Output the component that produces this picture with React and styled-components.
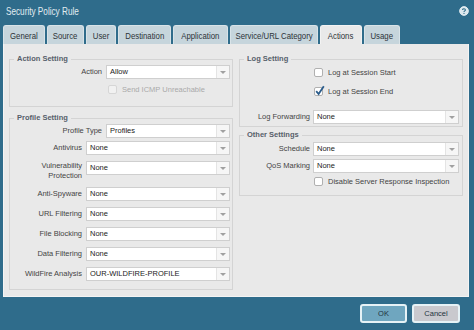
import React from 'react';
import styled, { createGlobalStyle } from 'styled-components';

const GlobalStyle = createGlobalStyle`
  html, body {
    margin: 0;
    padding: 0;
  }
  body {
    width: 474px;
    height: 330px;
    overflow: hidden;
    background: #2f6c8b;
  }
`;

const Dialog = styled.div`
  width: 474px;
  height: 330px;
  background: #2f6c8b;
  display: flex;
  flex-direction: column;
  font-family: 'Liberation Sans', Arial, sans-serif;
`;

// Title bar
const TitleBar = styled.div`
  height: 23px;
  display: flex;
  align-items: center;
  justify-content: space-between;
  padding: 0 5px 2px 6px;
  box-sizing: border-box;
`;

// narrow look of the original UI font
const Narrow = styled.span`
  display: inline-block;
  white-space: nowrap;
  transform: scaleX(${(p) => p.sx || 0.82});
  transform-origin: ${(p) => p.origin || 'center'};
`;

const Title = styled.span`
  font-size: 10.5px;
  color: #e2edf2;
`;

const HelpIcon = () => (
  <svg width="10" height="10" viewBox="0 0 10 10">
    <circle cx="5" cy="5" r="4.4" fill="#dce8ee" stroke="#f4f8fa" strokeWidth="0.8" />
    <path d="M3.6 3.9 C3.6 2.4 6.4 2.4 6.4 3.9 C6.4 4.9 5 4.9 5 6" fill="none" stroke="#2f6c8b" strokeWidth="1.1" />
    <circle cx="5" cy="7.4" r="0.6" fill="#2f6c8b" />
  </svg>
);

// Tabs
const TabStrip = styled.div`
  display: flex;
  gap: 2px;
  height: 19px;
  padding-left: 3px;
  margin-top: 2px;
`;

const Tab = styled.div`
  width: ${(p) => p.w}px;
  height: 19px;
  box-sizing: border-box;
  display: flex;
  align-items: center;
  justify-content: center;
  border-radius: 3px 3px 0 0;
  background: ${(p) => (p.active ? '#e9e9e9' : '#c6d5dc')};
  border: 1px solid ${(p) => (p.active ? '#f3f3f3' : '#d8e3e8')};
  border-bottom: none;
  font-size: 9.5px;
  color: #2c3338;
  overflow: hidden;
`;

// Main panel
const Panel = styled.div`
  margin: 0 5px 0 3px;
  height: 253px;
  box-sizing: border-box;
  background: #e9e9e9;
  border: 1px solid #f4f4f4;
  border-top: none;
  display: grid;
  grid-template-columns: 1fr 1fr;
  column-gap: 6px;
  padding: 10px 5px 0 5px;
  align-items: start;
`;

const Column = styled.div`
  display: flex;
  flex-direction: column;
  gap: ${(p) => p.gap}px;
`;

const Fieldset = styled.fieldset`
  margin: 0;
  min-width: 0;
  border: 1px solid #d4d4d4;
  padding: ${(p) => p.pad || '1px 2px 8px 0'};
  display: flex;
  flex-direction: column;
  gap: ${(p) => p.gap || 6}px;
`;

const Legend = styled.legend`
  margin-left: 4px;
  padding: 0 3px;
  font-size: 7.5px;
  font-weight: bold;
  line-height: 10px;
  color: #56606a;
`;

const Row = styled.div`
  display: flex;
  align-items: ${(p) => (p.top ? 'flex-start' : 'center')};
  min-height: 14px;
  margin-top: ${(p) => p.mt || 0}px;
`;

const Label = styled.div`
  width: ${(p) => p.w}px;
  flex: none;
  padding-right: ${(p) => p.gap || 4}px;
  text-align: right;
  font-size: 7.5px;
  line-height: 10px;
  color: #444;
`;

const SelectBox = styled.div`
  flex: 1;
  height: 14px;
  box-sizing: border-box;
  display: flex;
  background: #fff;
  border: 1px solid #cfcfcf;
`;

const SelectValue = styled.span`
  flex: 1;
  padding-left: 3px;
  font-size: 7.5px;
  line-height: 12px;
  color: #222;
  white-space: nowrap;
`;

const ArrowCell = styled.span`
  width: 12px;
  border-left: 1px solid #e4e4e4;
  background: #f6f6f6;
  display: flex;
  align-items: center;
  justify-content: center;
`;

const Caret = styled.span`
  width: 0;
  height: 0;
  border-left: 3px solid transparent;
  border-right: 3px solid transparent;
  border-top: 3px solid #a0a0a0;
`;

const Select = ({ value }) => (
  <SelectBox>
    <SelectValue>{value}</SelectValue>
    <ArrowCell>
      <Caret />
    </ArrowCell>
  </SelectBox>
);

const CheckRow = styled.label`
  display: flex;
  align-items: center;
  gap: 5px;
  padding-left: ${(p) => p.indent}px;
  height: 10px;
  font-size: 7.5px;
  color: ${(p) => (p.disabled ? '#a9a9a9' : '#444')};
`;

const Box = styled.span`
  position: relative;
  width: 9px;
  height: 9px;
  box-sizing: border-box;
  background: ${(p) => (p.disabled ? '#f1f1f1' : '#fff')};
  border: 1px solid ${(p) => (p.disabled ? '#d6d6d6' : '#b0b0b0')};
  border-radius: 2px;
  flex: none;
`;

const Tick = styled.svg`
  position: absolute;
  left: 0;
  top: -3px;
`;

const Check = ({ checked, disabled, indent, children }) => (
  <CheckRow indent={indent} disabled={disabled}>
    <Box disabled={disabled}>
      {checked && (
        <Tick width="10" height="11" viewBox="0 0 10 11">
          <path d="M1.2 6.2 L3.6 9 L8.8 1.2" fill="none" stroke="#2b5c8a" strokeWidth="1.8" />
        </Tick>
      )}
    </Box>
    {children}
  </CheckRow>
);

// Footer buttons
const Footer = styled.div`
  display: flex;
  justify-content: flex-end;
  gap: 5px;
  padding: 7px 14px 0 0;
`;

const Button = styled.button`
  width: ${(p) => p.w}px;
  height: 19px;
  box-sizing: border-box;
  border: 2px solid #e6f2f6;
  border-radius: 3px;
  background: ${(p) => (p.primary ? '#6fa6bf' : '#c9c9ce')};
  font-family: 'Liberation Sans', Arial, sans-serif;
  font-size: 7.5px;
  color: #1f3340;
  padding: 0;
`;

const tabs = [
  ['General', 42],
  ['Source', 37],
  ['User', 30],
  ['Destination', 53],
  ['Application', 55],
  ['Service/URL Category', 88],
  ['Actions', 42],
  ['Usage', 36],
];

const profiles = [
  ['Antivirus', 'None'],
  ['Vulnerability Protection', 'None', true],
  ['Anti-Spyware', 'None'],
  ['URL Filtering', 'None'],
  ['File Blocking', 'None'],
  ['Data Filtering', 'None'],
  ['WildFire Analysis', 'OUR-WILDFIRE-PROFILE'],
];

const App = () => (
  <Dialog>
    <GlobalStyle />
    <TitleBar>
      <Title>
        <Narrow sx={0.78} origin="left">Security Policy Rule</Narrow>
      </Title>
      <HelpIcon />
    </TitleBar>
    <TabStrip>
      {tabs.map(([name, w]) => (
        <Tab key={name} w={w} active={name === 'Actions'}>
          <Narrow>{name}</Narrow>
        </Tab>
      ))}
    </TabStrip>
    <Panel>
      <Column gap={6}>
        <Fieldset gap={5} pad="1px 2px 12px 0">
          <Legend>Action Setting</Legend>
          <Row>
            <Label w={92}>Action</Label>
            <Select value="Allow" />
          </Row>
          <Check indent={98} disabled>
            Send ICMP Unreachable
          </Check>
        </Fieldset>
        <Fieldset pad="1px 2px 8px 0">
          <Legend>Profile Setting</Legend>
          <Row>
            <Label w={92}>Profile Type</Label>
            <Select value="Profiles" />
          </Row>
          {profiles.map(([label, value, twoLine], i) => (
            <Row key={label} top={twoLine} mt={i === 0 ? -3 : 0}>
              <Label w={72}>{label}</Label>
              <Select value={value} />
            </Row>
          ))}
        </Fieldset>
      </Column>
      <Column gap={3}>
        <Fieldset gap={9} pad="3px 3px 2px 0">
          <Legend>Log Setting</Legend>
          <Check indent={74} checked={false}>
            Log at Session Start
          </Check>
          <Check indent={74} checked>
            Log at Session End
          </Check>
          <Row mt={5}>
            <Label w={70} gap={3}>Log Forwarding</Label>
            <Select value="None" />
          </Row>
        </Fieldset>
        <Fieldset gap={3} pad="2px 3px 9px 0">
          <Legend>Other Settings</Legend>
          <Row>
            <Label w={70} gap={3}>Schedule</Label>
            <Select value="None" />
          </Row>
          <Row>
            <Label w={70} gap={3}>QoS Marking</Label>
            <Select value="None" />
          </Row>
          <Check indent={74}>Disable Server Response Inspection</Check>
        </Fieldset>
      </Column>
    </Panel>
    <Footer>
      <Button primary w={47}>OK</Button>
      <Button w={48}>Cancel</Button>
    </Footer>
  </Dialog>
);

export default App;
